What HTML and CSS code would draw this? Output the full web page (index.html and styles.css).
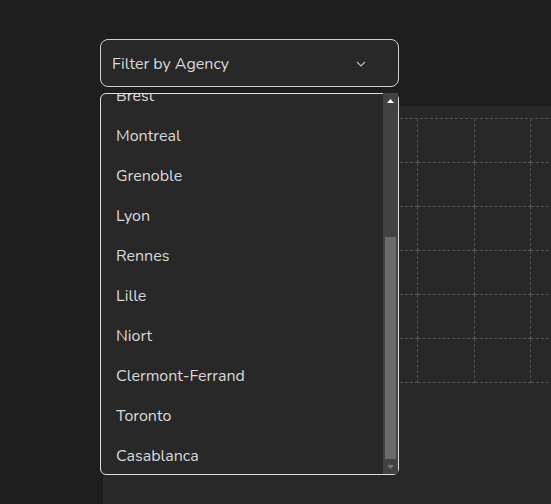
FILE: index.html
```html
<!DOCTYPE html>
<html lang="en">
    <head>
        <meta charset="UTF-8" />
        <meta name="viewport" content="width=device-width, initial-scale=1.0" />
        <link rel="stylesheet" href="styles.css">
        <title>Agencies</title>
    </head>
    <body>
        <div class="page">
            <!-- filtre agence -->
            <div class="filter">
                <div class="filter-select">
                    <span class="filter-label">Filter by Agency</span>
                    <svg class="filter-chevron" width="10" height="6" viewBox="0 0 10 6">
                        <path d="M1 1 L5 5 L9 1" fill="none" stroke="#bdbdbd" stroke-width="1.2" />
                    </svg>
                </div>
                <div class="filter-menu" id="agencyMenu">
                    <div class="filter-option">Paris</div>
                    <div class="filter-option">Bordeaux</div>
                    <div class="filter-option">Nantes</div>
                    <div class="filter-option">Toulouse</div>
                    <div class="filter-option">Marseille</div>
                    <div class="filter-option">Brest</div>
                    <div class="filter-option">Montreal</div>
                    <div class="filter-option">Grenoble</div>
                    <div class="filter-option">Lyon</div>
                    <div class="filter-option">Rennes</div>
                    <div class="filter-option">Lille</div>
                    <div class="filter-option">Niort</div>
                    <div class="filter-option">Clermont-Ferrand</div>
                    <div class="filter-option">Toronto</div>
                    <div class="filter-option">Casablanca</div>
                </div>
                <!-- barre de défilement -->
                <div class="menu-scrollbar">
                    <div class="menu-scroll-btn">
                        <svg width="7" height="4" viewBox="0 0 7 4"><path d="M0 4 L3.5 0 L7 4 Z" fill="#ffffff" /></svg>
                    </div>
                    <div class="menu-scroll-track">
                        <div class="menu-scroll-thumb" id="scrollThumb"></div>
                    </div>
                    <div class="menu-scroll-btn">
                        <svg width="7" height="4" viewBox="0 0 7 4"><path d="M0 0 L3.5 4 L7 0 Z" fill="#757575" /></svg>
                    </div>
                </div>
            </div>

            <!-- planning -->
            <div class="board">
                <div class="board-grid" id="boardGrid"></div>
            </div>
        </div>
        <script src="script.js"></script>
    </body>
</html>
```

FILE: styles.css
```css
body,
html {
    margin: 0;
    padding: 0;
    height: 100%;
    overflow: hidden;
    background: #1e1e1e;
    font-family: "Nunito", Lato, "Open Sans", sans-serif;
}

.page {
    padding: 39px 0 0 100px;
}

.filter {
    position: relative;
    width: 299px;
    z-index: 10;
}

.filter-select {
    box-sizing: border-box;
    height: 48px;
    display: flex;
    align-items: center;
    justify-content: space-between;
    padding: 1px 32px 0 11px;
    background: #282828;
    border: 1px solid #cfcfcf;
    border-radius: 8px;
}

.filter-label {
    color: #d8d8d8;
    font-size: 16px;
}

.filter-chevron {
    display: block;
    margin-top: 1px;
}

/* liste déroulante */
.filter-menu {
    position: absolute;
    top: 54px;
    left: 0;
    box-sizing: border-box;
    width: 299px;
    height: 382px;
    overflow: hidden;
    background: #282828;
    border: 1px solid #dcdcdc;
    border-radius: 6px;
}

.filter-option {
    box-sizing: border-box;
    height: 40px;
    padding: 4px 0 0 15px;
    line-height: 36px;
    color: #d8d8d8;
    font-size: 16px;
}

.menu-scrollbar {
    position: absolute;
    top: 54px;
    right: 1px;
    width: 15px;
    height: 381px;
    display: flex;
    flex-direction: column;
    background: #424242;
}

.menu-scroll-btn {
    height: 15px;
    display: flex;
    align-items: center;
    justify-content: center;
}

.menu-scroll-track {
    flex: 1;
    display: flex;
    flex-direction: column;
    justify-content: flex-end;
    padding: 0 2px;
}

.menu-scroll-thumb {
    background: #6b6b6b;
}

.board {
    margin: 19px 0 0 3px;
    height: 420px;
    padding: 12px 0 0 31px;
    background: #282828;
}

.board-grid {
    display: grid;
    grid-template-columns: repeat(12, 56.6px);
    grid-template-rows: repeat(6, 44px);
    border-top: 1px dashed #555;
    border-left: 1px dashed #555;
    width: max-content;
}

.board-cell {
    box-sizing: border-box;
    border-right: 1px dashed #555;
    border-bottom: 1px dashed #555;
}
```

FILE: script.js
```js
// cellules du planning
const grid = document.getElementById("boardGrid");
for (let i = 0; i < 72; i++) {
    const cell = document.createElement("div");
    cell.className = "board-cell";
    grid.appendChild(cell);
}

// liste ouverte en bas
const menu = document.getElementById("agencyMenu");
menu.scrollTop = menu.scrollHeight;

// taille du curseur selon la partie visible
const thumb = document.getElementById("scrollThumb");
const track = thumb.parentNode.clientHeight;
thumb.style.height = `${Math.round(track * menu.clientHeight / menu.scrollHeight)}px`;
```
